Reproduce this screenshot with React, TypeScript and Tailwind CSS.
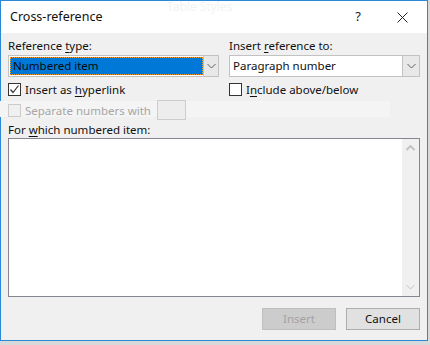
import React from 'react';

const font = { fontFamily: '"Noto Sans", "Liberation Sans", sans-serif' };

function Chevron({ down = true, color = '#606060' }: { down?: boolean; color?: string }) {
  return (
    <svg width="9" height="6" viewBox="0 0 9 6">
      <path d={down ? 'M0.5 1L4.5 5L8.5 1' : 'M0.5 5L4.5 1L8.5 5'} fill="none" stroke={color} strokeWidth={down ? 1 : 2} />
    </svg>
  );
}

function CheckBox({ checked = false, disabled = false }: { checked?: boolean; disabled?: boolean }) {
  return (
    <div
      className={`w-[13px] h-[13px] border flex items-center justify-center shrink-0 ${
        disabled ? 'border-[#cccccc] bg-[#f0f0f0]' : 'border-[#333333] bg-white'
      }`}
    >
      {checked && (
        <svg width="11" height="11" viewBox="0 0 11 11">
          <path d="M1.5 5.5L4 8.5L9.5 1.5" fill="none" stroke="#333333" strokeWidth="1.2" />
        </svg>
      )}
    </div>
  );
}

export default function App() {
  return (
    <div className="w-[430px] h-[345px] bg-[#d9d9d9] overflow-hidden text-[11.5px] text-black" style={font}>
      <div className="w-[428px] h-[341px] border border-[#2b88d8] bg-[#f0f0f0] flex flex-col">
        {/* title bar */}
        <div className="relative h-[32px] bg-white flex items-center shrink-0">
          {/* faint text of the window behind */}
          <span className="absolute left-[166px] top-0 text-[12px] leading-[12px] text-[#f3f3f3] select-none">
            Table Styles
          </span>
          <span className="ml-[9px] text-[12.5px] text-[#111]">Cross-reference</span>
          <span className="ml-auto mr-[36px] text-[13px] text-[#222]">?</span>
          <svg className="mr-[19px]" width="11" height="11" viewBox="0 0 11 11">
            <path d="M0.5 0.5L10.5 10.5M10.5 0.5L0.5 10.5" stroke="#222" strokeWidth="1" />
          </svg>
        </div>

        {/* body */}
        <div className="flex-1 flex flex-col">
          <div className="flex gap-[10px] pl-[7px] pr-[7px] pt-[5px]">
            {/* left column */}
            <div className="w-[211px] flex flex-col">
              <div className="h-[16px] leading-[16px] text-[#111]">
                Reference <span className="underline underline-offset-2">t</span>ype:
              </div>
              <div className="mt-[1px] h-[22px] border border-[#c2c2c2] bg-white flex p-[1px]">
                <div className="flex-1 bg-[#0078d7] border border-dotted border-[#f0a030] flex items-center pl-[2px] text-[#0a0a0a]">
                  Numbered item
                </div>
                <div className="w-[16px] -my-[2px] -mr-[2px] border border-[#c2c2c2] bg-[#e8e8e8] flex items-center justify-center">
                  <Chevron />
                </div>
              </div>
              <div className="mt-[6px] h-[13px] flex items-center gap-[4px]">
                <CheckBox checked />
                <span className="leading-[13px] text-[#111]">
                  Insert as <span className="underline underline-offset-2">h</span>yperlink
                </span>
              </div>
            </div>

            {/* right column */}
            <div className="flex-1 flex flex-col">
              <div className="h-[16px] leading-[16px] text-[#111]">
                Insert <span className="underline underline-offset-2">r</span>eference to:
              </div>
              <div className="mt-[1px] h-[22px] border border-[#c2c2c2] bg-white flex">
                <div className="flex-1 flex items-center pl-[3px] text-[#111]">Paragraph number</div>
                <div className="w-[17px] border-l border-[#c2c2c2] bg-[#e8e8e8] flex items-center justify-center">
                  <Chevron />
                </div>
              </div>
              <div className="mt-[6px] h-[13px] flex items-center gap-[4px]">
                <CheckBox />
                <span className="leading-[13px] text-[#111]">
                  I<span className="underline underline-offset-2">n</span>clude above/below
                </span>
              </div>
            </div>
          </div>

          {/* separate numbers row */}
          <div className="mt-[2px] h-[21px] flex items-center">
            <div className="w-[390px] -ml-[1px] h-[16px] bg-[#f4f4f4] flex items-center pl-[8px] relative">
              <div className="mt-[4px]">
                <CheckBox disabled />
              </div>
              <span className="ml-[4px] mt-[4px] text-[#a6a6a6] leading-[13px]">Separate numbers with</span>
              <div className="absolute left-[157px] -top-[1px] w-[29px] h-[20px] border border-[#cccccc] bg-[#ededed]" />
            </div>
          </div>

          <div className="mt-[3px] pl-[7px] h-[16px] leading-[16px] text-[#111]">
            For <span className="underline underline-offset-2">w</span>hich numbered item:
          </div>

          {/* list */}
          <div className="mx-[7px] h-[159px] border border-[#828790] bg-white flex">
            <div className="flex-1" />
            <div className="w-[17px] bg-[#f0f0f0] flex flex-col items-center justify-between py-[6px]">
              <Chevron down={false} color="#c2c2c2" />
              <Chevron color="#c2c2c2" />
            </div>
          </div>

          {/* buttons */}
          <div className="mt-[11px] flex justify-end gap-[10px] pr-[7px]">
            <div className="w-[74px] h-[22px] border border-[#bfbfbf] bg-[#cccccc] flex items-center justify-center text-[#a3a3a3]">
              Insert
            </div>
            <div className="w-[74px] h-[22px] border border-[#adadad] bg-[#e1e1e1] flex items-center justify-center text-[#111]">
              Cancel
            </div>
          </div>
        </div>
      </div>
    </div>
  );
}
